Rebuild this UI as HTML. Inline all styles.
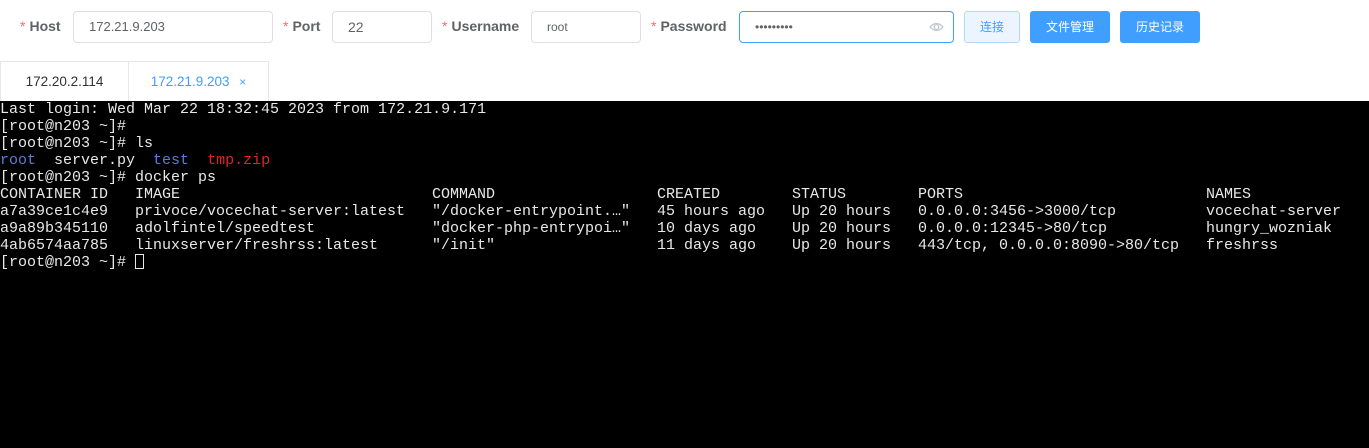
<!DOCTYPE html>
<html><head><meta charset="utf-8"><style>
body{margin:0;width:1369px;height:448px;background:#000;overflow:hidden;font-family:"Liberation Sans","Noto Sans CJK SC",sans-serif;}
.top{position:absolute;left:0;top:0;width:1369px;height:101px;background:#fff;}
.lbl{position:absolute;top:18px;font-size:14px;font-weight:bold;color:#606266;}
.lbl b{color:#f56c6c;font-weight:normal;margin-right:4px;}
.inp{position:absolute;top:11px;height:32px;border:1px solid #dcdfe6;border-radius:4px;box-sizing:border-box;font-size:13px;color:#606266;padding-left:15px;line-height:30px;}
.btn{position:absolute;top:11px;height:32px;border-radius:3px;box-sizing:border-box;font-size:12px;text-align:center;line-height:30px;color:#fff;background:#409eff;border:1px solid #409eff;}
.tab{position:absolute;top:61px;height:40px;border:1px solid #e4e7ed;box-sizing:border-box;font-size:13.5px;line-height:40px;text-align:center;border-bottom:none;}
.term{position:absolute;left:0;top:101px;font-family:"Liberation Mono",monospace;font-size:15px;line-height:17px;color:#e8e8e8;}
.r{position:relative;height:17px;white-space:pre;}
.r span.c{position:absolute;top:0;}
.bl{color:#5c7dd6}.rd{color:#e02424}
.cur{display:inline-block;width:9px;height:15px;border:1px solid #e8e8e8;vertical-align:-3px;box-sizing:border-box;}
</style></head><body>
<div class="top">
<div class="lbl" style="left:20px"><b>*</b>Host</div>
<div class="inp" style="left:73px;width:200px">172.21.9.203</div>
<div class="lbl" style="left:283px"><b>*</b>Port</div>
<div class="inp" style="left:332px;width:100px;font-size:14px">22</div>
<div class="lbl" style="left:442px"><b>*</b>Username</div>
<div class="inp" style="left:531px;width:110px;font-size:12px">root</div>
<div class="lbl" style="left:651px"><b>*</b>Password</div>
<div class="inp" style="left:739px;width:215px;border-color:#409eff;font-size:12px">•••••••••
<svg style="position:absolute;right:9px;top:9px" width="15" height="12" viewBox="0 0 15 12"><path d="M1 6 Q7.5 -1 14 6 Q7.5 13 1 6Z" fill="none" stroke="#c0c4cc" stroke-width="1.2"/><circle cx="7.5" cy="6" r="2.3" fill="none" stroke="#c0c4cc" stroke-width="1.2"/></svg></div>
<div class="btn" style="left:964px;width:56px;background:#ecf5ff;border-color:#b3d8ff;color:#409eff">连接</div>
<div class="btn" style="left:1030px;width:80px">文件管理</div>
<div class="btn" style="left:1120px;width:80px">历史记录</div>
<div class="tab" style="left:0;width:129px;color:#303133">172.20.2.114</div>
<div class="tab" style="left:128px;width:141px;color:#409eff">172.21.9.203 <span style="font-size:12px;margin-left:6px">×</span></div>
</div>
<div class="term"><div class="r">Last login: Wed Mar 22 18:32:45 2023 from 172.21.9.171</div><div class="r">[root@n203 ~]#</div><div class="r">[root@n203 ~]# ls</div><div class="r"><span class="bl">root</span>  server.py  <span class="bl">test</span>  <span class="rd">tmp.zip</span></div><div class="r">[root@n203 ~]# docker ps</div><div class="r"><span class="c" style="left:0">CONTAINER ID</span><span class="c" style="left:135px">IMAGE</span><span class="c" style="left:432px">COMMAND</span><span class="c" style="left:657px">CREATED</span><span class="c" style="left:792px">STATUS</span><span class="c" style="left:918px">PORTS</span><span class="c" style="left:1206px">NAMES</span></div><div class="r"><span class="c" style="left:0">a7a39ce1c4e9</span><span class="c" style="left:135px">privoce/vocechat-server:latest</span><span class="c" style="left:432px">"/docker-entrypoint.…"</span><span class="c" style="left:657px">45 hours ago</span><span class="c" style="left:792px">Up 20 hours</span><span class="c" style="left:918px">0.0.0.0:3456-&gt;3000/tcp</span><span class="c" style="left:1206px">vocechat-server</span></div><div class="r"><span class="c" style="left:0">a9a89b345110</span><span class="c" style="left:135px">adolfintel/speedtest</span><span class="c" style="left:432px">"docker-php-entrypoi…"</span><span class="c" style="left:657px">10 days ago</span><span class="c" style="left:792px">Up 20 hours</span><span class="c" style="left:918px">0.0.0.0:12345-&gt;80/tcp</span><span class="c" style="left:1206px">hungry_wozniak</span></div><div class="r"><span class="c" style="left:0">4ab6574aa785</span><span class="c" style="left:135px">linuxserver/freshrss:latest</span><span class="c" style="left:432px">"/init"</span><span class="c" style="left:657px">11 days ago</span><span class="c" style="left:792px">Up 20 hours</span><span class="c" style="left:918px">443/tcp, 0.0.0.0:8090-&gt;80/tcp</span><span class="c" style="left:1206px">freshrss</span></div><div class="r">[root@n203 ~]# <span class="cur"></span></div></div>
</body></html>
